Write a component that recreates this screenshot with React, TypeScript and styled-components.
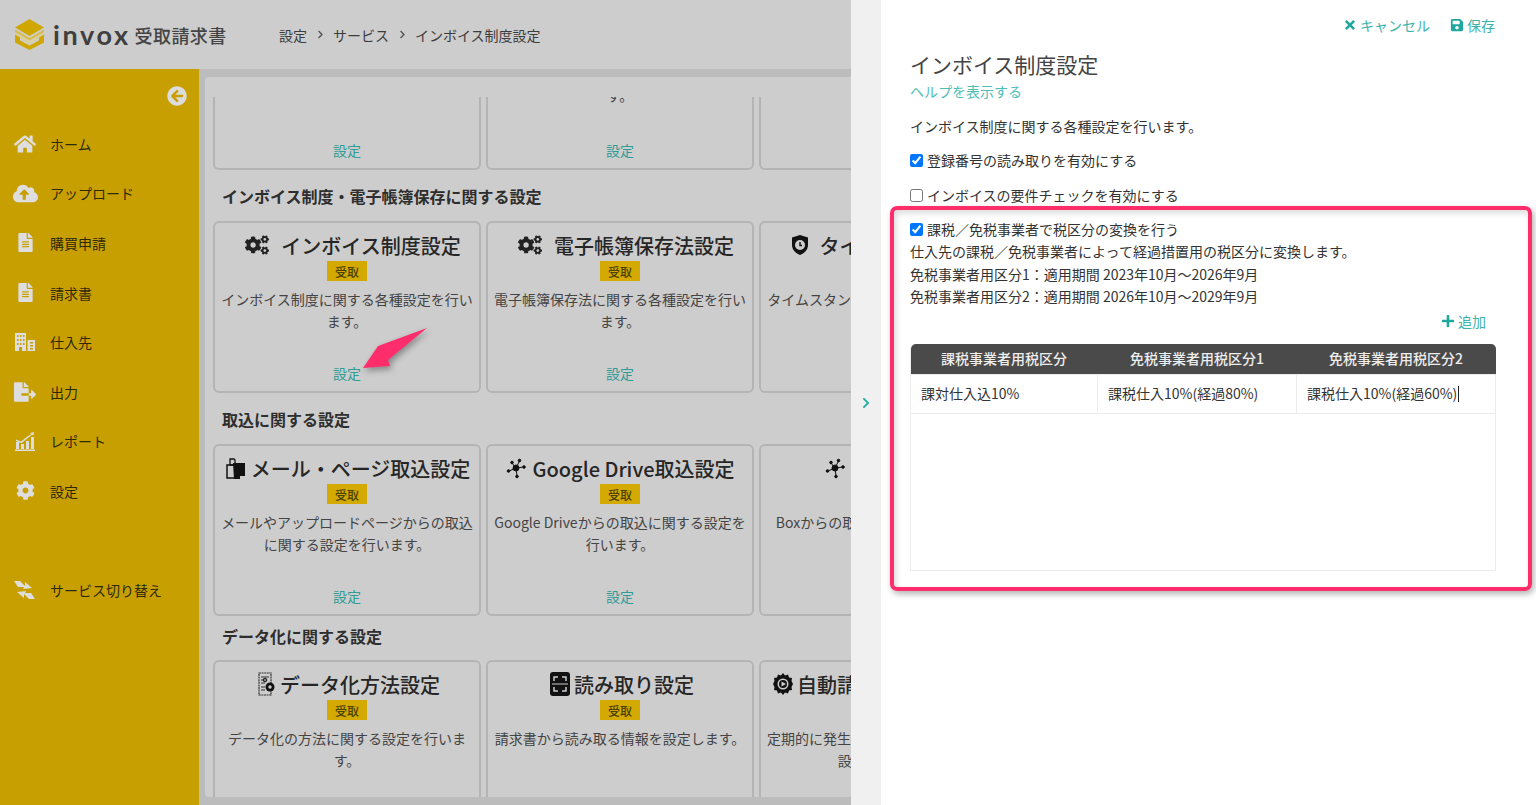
import React from 'react';
import styled, { createGlobalStyle } from 'styled-components';
import {
  FaHome,
  FaCloudUploadAlt,
  FaFileAlt,
  FaFileExport,
  FaCog,
  FaCogs,
  FaArrowCircleLeft,
  FaChevronRight,
  FaTimes,
  FaSave,
  FaPlus,
} from 'react-icons/fa';

const GlobalStyle = createGlobalStyle`
  html, body {
    margin: 0;
    padding: 0;
    height: 100%;
    overflow: hidden;
  }

  body {
    font-family: "Noto Sans CJK JP", "Noto Sans", sans-serif;
    font-size: 14px;
    color: #333;
    background: #fff;
  }

  * {
    box-sizing: border-box;
  }
`;

const Screen = styled.div`
  position: relative;
  display: flex;
  width: 1536px;
  height: 805px;
  overflow: hidden;
`;

// dimmed page behind the slide-in panel
const Page = styled.div`
  display: flex;
  flex-direction: column;
  flex: 0 0 851px;
  position: relative;
  overflow: hidden;
  background: #cdcdcd;
`;

const Header = styled.header`
  display: flex;
  align-items: center;
  flex: 0 0 69px;
  padding-left: 14px;
`;

const Brand = styled.div`
  display: flex;
  align-items: center;
  width: 265px;
`;

const BrandName = styled.span`
  margin-left: 8px;
  font-family: "Lato", "Noto Sans", sans-serif;
  font-size: 27px;
  font-weight: 700;
  letter-spacing: 2.6px;
  line-height: 30px;
  color: #3f3f3f;
`;

const BrandSub = styled.span`
  margin-left: 4px;
  font-size: 18px;
  font-weight: 500;
  letter-spacing: 0.4px;
  color: #444;
`;

const Breadcrumb = styled.nav`
  display: flex;
  align-items: center;
  gap: 8.5px;
  font-size: 14px;
  color: #3c3c3c;

  svg {
    font-size: 9px;
    color: #555;
  }
`;

const Body = styled.div`
  display: flex;
  flex: 1;
  min-height: 0;
`;

const Sidebar = styled.aside`
  flex: 0 0 199px;
  background: #c89f00;
`;

const CollapseRow = styled.div`
  display: flex;
  justify-content: flex-end;
  height: 50px;
  padding: 17px 12px 0 0;
  color: #dcdcdc;
  font-size: 20px;
`;

const NavItem = styled.div<{ $gap?: boolean }>`
  display: flex;
  align-items: center;
  height: 49.6px;
  margin-top: ${p => (p.$gap ? '49.6px' : '0')};
  font-size: 14px;
  color: #2e2a08;
`;

const NavIcon = styled.span`
  display: flex;
  align-items: center;
  justify-content: center;
  width: 50px;
  color: #dedede;
`;

const Main = styled.main`
  flex: 1;
  min-width: 0;
  padding: 8px 0 8px 6px;
  background: #bcbcbc;
  display: flex;
`;

const Content = styled.div`
  flex: 1;
  min-width: 0;
  padding: 20px 0 0 8px;
  border-radius: 4px 0 0 4px;
  background: #cdcdcd;
  overflow: hidden;
`;

const CardGrid = styled.div`
  display: grid;
  grid-template-columns: repeat(3, 268px);
  gap: 5px;
  width: 814px;
`;

const SectionTitle = styled.h3<{ $compact?: boolean }>`
  display: flex;
  align-items: center;
  margin: 0;
  padding: ${p => (p.$compact ? '8px 0 12px 9px' : '13px 0 13px 9px')};
  height: ${p => (p.$compact ? '44px' : '51px')};
  font-size: 16px;
  font-weight: 700;
  line-height: 24px;
  color: #2e2e2e;
`;

const Card = styled.section<{ $clipped?: boolean }>`
  display: flex;
  flex-direction: column;
  align-items: center;
  height: ${p => (p.$clipped ? '73px' : '172px')};
  padding: ${p => (p.$clipped ? '0 5px 7px' : '7px 5px 7px')};
  border: 2px solid #b4b4b4;
  border-top-width: ${p => (p.$clipped ? '0' : '2px')};
  border-radius: ${p => (p.$clipped ? '0 0 6px 6px' : '6px')};
  overflow: hidden;
`;

const CardTitle = styled.h4`
  display: flex;
  align-items: center;
  justify-content: center;
  height: 30px;
  margin: 0 0 1px;
  font-size: 20px;
  font-weight: 500;
  white-space: nowrap;
  color: #262626;
`;

const CardIcon = styled.span<{ $lead?: number; $trail?: number }>`
  display: flex;
  align-items: center;
  margin-left: ${p => p.$lead ?? 0}px;
  margin-right: ${p => p.$trail ?? 4}px;
`;

const Badge = styled.span`
  display: flex;
  align-items: center;
  justify-content: center;
  width: 40px;
  height: 20px;
  background: #d4aa00;
  font-size: 12px;
  font-weight: 500;
  color: #4a4000;
`;

const CardText = styled.p<{ $tail?: boolean }>`
  margin: ${p => (p.$tail ? '-13px 0 0' : '7px 0 0')};
  width: 100%;
  font-size: 14px;
  line-height: 22px;
  text-align: center;
  color: #444;
`;

const CardLink = styled.a`
  margin-top: auto;
  font-size: 14px;
  line-height: 22px;
  color: #2f9c96;
`;

const PointerArrow = styled.svg`
  position: absolute;
  left: 355px;
  top: 322px;
  filter: drop-shadow(2px 3px 3px rgba(0, 0, 0, 0.35));
`;

const Gutter = styled.div`
  display: flex;
  align-items: center;
  justify-content: center;
  flex: 0 0 30px;
  background: #f0f0f0;
  color: #26b0a6;
  font-size: 12px;
`;

const Panel = styled.div`
  flex: 1;
  min-width: 0;
  padding: 15px 40px 0 29px;
  background: #fff;
  color: #333;
`;

const Actions = styled.div`
  display: flex;
  justify-content: flex-end;
  gap: 20px;
  height: 20px;
  margin-right: 1px;
`;

const ActionLink = styled.a`
  display: flex;
  align-items: center;
  gap: 3px;
  font-size: 14px;
  line-height: 20px;
  color: #3bb3aa;

  svg {
    font-size: 14px;
    color: #1fa79d;
  }
`;

const PanelTitle = styled.h2`
  margin: 14px 0 0;
  font-size: 21px;
  font-weight: 400;
  line-height: 30px;
  color: #444;
`;

const HelpLink = styled.a`
  display: block;
  margin-top: 1px;
  font-size: 14px;
  line-height: 22px;
  color: #4dbdb5;
`;

const Line = styled.div<{ $top?: number }>`
  margin-top: ${p => p.$top ?? 0}px;
  font-size: 14px;
  line-height: 22px;
  color: #333;
`;

const CheckRow = styled.label<{ $top: number }>`
  display: flex;
  align-items: center;
  gap: 4px;
  height: 22px;
  margin-top: ${p => p.$top}px;
  font-size: 14px;
`;

const Check = styled.input.attrs({ type: 'checkbox', readOnly: true })`
  width: 13px;
  height: 13px;
  margin: 0;
  accent-color: #0075ff;
`;

const AddRow = styled.div`
  display: flex;
  justify-content: flex-end;
  margin-top: 3px;
  padding-right: 10px;
  height: 22px;
`;

const TableBox = styled.div`
  height: 227px;
  margin-top: 12px;
  border: 1px solid #ececec;
  border-top: 0;
  border-radius: 5px 5px 0 0;
`;

const Table = styled.table`
  width: 585px;
  margin-left: -1px;
  border-collapse: collapse;
  table-layout: fixed;
`;

const Th = styled.th<{ $w: number }>`
  width: ${p => p.$w}px;
  height: 30px;
  padding: 0 0 2px;
  background: #4a4a4a;
  font-size: 14px;
  font-weight: 500;
  color: #eee;

  &:first-child {
    border-top-left-radius: 5px;
  }

  &:last-child {
    border-top-right-radius: 5px;
  }
`;

const Td = styled.td`
  height: 39px;
  padding: 0 10px 2px;
  border: 1px solid #ececec;
  font-size: 14px;
  color: #333;
  white-space: nowrap;
`;

const Caret = styled.span`
  display: inline-block;
  width: 1px;
  height: 16px;
  margin-left: 1px;
  background: #222;
  vertical-align: -3px;
`;

// annotation drawn over the screenshot
const Highlight = styled.div`
  position: absolute;
  left: 890px;
  top: 206px;
  width: 642px;
  height: 385px;
  border: 4px solid #ff2d6c;
  border-radius: 7px;
  box-shadow: 2px 3px 6px rgba(0, 0, 0, 0.3), inset 2px 3px 6px rgba(0, 0, 0, 0.15);
  pointer-events: none;
`;

const LogoMark = () => (
  <svg width="31" height="31" viewBox="0 0 31 31">
    <path d="M15.5 0 30 8.5 15.5 17 1 8.5z" fill="#cfa700" />
    <path d="M1 10.5 15.5 19 30 10.5V13L15.5 21.5 1 13z" fill="#d9bd4a" />
    <path d="M1 14 15.5 22.5 30 14v2L15.5 24.5 1 16z" fill="#e0d08a" />
    <path d="M1 15.5v8L15.5 31 30 23.5v-8l-5 3v3l-9.5 5-9.5-5v-3z" fill="#cfa700" />
  </svg>
);

const BuildingIcon = () => (
  <svg width="20" height="20" viewBox="0 0 20 20" fill="currentColor">
    <path
      fillRule="evenodd"
      d="M0 1h11v18H7v-4H4v4H0zM2 3v2h1.500V3zm3 0v2h1.500V3zm3 0v2h1.500V3zM2 7v2h1.500V7zm3 0v2h1.500V7zm3 0v2h1.500V7zM2 11v2h1.500v-2zm3 0v2h1.500v-2zm3 0v2h1.500v-2z"
    />
    <path fillRule="evenodd" d="M12.500 8H20v11h-7.500zM15 10v1.500h3V10zm0 3v1.500h3V13zm0 3v1.500h3V16z" />
  </svg>
);

const ReportIcon = () => (
  <svg width="20" height="20" viewBox="0 0 20 20" fill="currentColor">
    <path d="M1 11h3v7H1zM6 13h3v5H6zM11 10h3v8h-3zM16 6h3v12h-3zM0 18.500h20V20H0z" />
    <path d="M1 8.500 6 10.500 13 5 16 3.500 15.400 2 19 1l-.6 3.600L17 3.800 13.800 6.300 6.400 12.200 1 10z" />
  </svg>
);

const SwitchIcon = () => (
  <svg width="22" height="20" viewBox="0 0 22 20" fill="currentColor">
    <path d="M0 1h6l5 5V2l7 6-9 1 1-2-3 0-3 0z" />
    <path d="M21 19h-6l-5-5v4l-7-6 9-1-1 2h6z" />
  </svg>
);

const ShieldIcon = () => (
  <svg width="20" height="22" viewBox="0 0 20 22">
    <path d="M10 1 18 3.500V11c0 5-4 8.500-8 10-4-1.500-8-5-8-10V3.500z" fill="#111" />
    <circle cx="10" cy="11" r="5" fill="#cdcdcd" />
    <path d="M10 8v3.500h2" stroke="#111" strokeWidth="1.400" fill="none" />
  </svg>
);

const MailPageIcon = () => (
  <svg width="22" height="24" viewBox="0 0 22 24">
    <path d="M2 9h8v13H2z" fill="none" stroke="#111" strokeWidth="1.500" />
    <path d="M5 9V3h4l1 1v5z" fill="none" stroke="#111" strokeWidth="1.300" />
    <path d="M8 7h12v13h-5v3H9z" fill="#111" />
  </svg>
);

const HubIcon = () => (
  <svg width="20" height="22" viewBox="0 0 20 22" fill="#111" stroke="#111" strokeWidth="1">
    <path d="M10 11 13.500 4M10 11 18 10M10 11 11 19M10 11 3 14M10 11 6 6" fill="none" />
    <circle cx="10" cy="11" r="3" />
    <circle cx="13.500" cy="3.500" r="1.300" />
    <circle cx="18" cy="10" r="1.300" />
    <circle cx="11" cy="19.500" r="1.300" />
    <circle cx="2.500" cy="14" r="1.300" />
    <circle cx="6" cy="5.500" r="1.300" />
  </svg>
);

const DataDocIcon = () => (
  <svg width="18" height="24" viewBox="0 0 18 24">
    <path d="M1 1h12v22H1z" fill="none" stroke="#333" strokeWidth="1.200" strokeDasharray="2 0.600" />
    <path d="M3 5h8M3 8h5M3 11h4M3 15h4M3 18h4" stroke="#333" strokeWidth="1.200" />
    <circle cx="12" cy="15" r="4.500" fill="#111" />
    <circle cx="12" cy="15" r="1.700" fill="#cdcdcd" />
    <circle cx="7" cy="8" r="1.800" fill="none" stroke="#111" />
  </svg>
);

const ScanIcon = () => (
  <svg width="20" height="24" viewBox="0 0 20 24">
    <rect x="0" y="0" width="20" height="24" rx="3" fill="#111" />
    <path d="M4 9V5h4M12 5h4v4M16 15v4h-4M8 19H4v-4" stroke="#cdcdcd" strokeWidth="1.500" fill="none" />
    <path d="M2 12h16" stroke="#cdcdcd" strokeWidth="1" />
  </svg>
);

const AutoIcon = () => (
  <svg width="20" height="22" viewBox="0 0 20 22">
    <path
      d="M10 0l2 2.500 3-1 1 3 3 .5-.5 3L20 11l-1.500 3 .5 3-3 .5-1 3-3-1L10 22l-2-2.500-3 1-1-3-3-.5.5-3L0 11l1.500-3L1 5l3-.5 1-3 3 1z"
      fill="#111"
    />
    <circle cx="10" cy="11" r="5.500" fill="#cdcdcd" />
    <circle cx="10" cy="11" r="4" fill="#111" />
    <path d="M8.500 8.500 13 11l-4.500 2.500z" fill="#cdcdcd" />
  </svg>
);

const GearsIcon = () => <FaCogs size={24} color="#222" />;

const navItems = [
  { label: 'ホーム', icon: <FaHome size={22} /> },
  { label: 'アップロード', icon: <FaCloudUploadAlt size={25} /> },
  { label: '購買申請', icon: <FaFileAlt size={19} /> },
  { label: '請求書', icon: <FaFileAlt size={19} /> },
  { label: '仕入先', icon: <BuildingIcon /> },
  { label: '出力', icon: <FaFileExport size={22} /> },
  { label: 'レポート', icon: <ReportIcon /> },
  { label: '設定', icon: <FaCog size={19} /> },
];

const sections = [
  {
    title: 'インボイス制度・電子帳簿保存に関する設定',
    cards: [
      { title: 'インボイス制度設定', icon: <GearsIcon />, lead: 12, trail: 12, text: 'インボイス制度に関する各種設定を行います。', link: true },
      { title: '電子帳簿保存法設定', icon: <GearsIcon />, lead: 12, trail: 12, text: '電子帳簿保存法に関する各種設定を行います。', link: true },
      { title: 'タイムスタンプ設定', icon: <ShieldIcon />, lead: 2, trail: 10, text: 'タイムスタンプの付与に関する設定を行います。', link: false },
    ],
  },
  {
    title: '取込に関する設定',
    cards: [
      { title: 'メール・ページ取込設定', icon: <MailPageIcon />, lead: 1, text: 'メールやアップロードページからの取込に関する設定を行います。', link: true },
      { title: 'Google Drive取込設定', icon: <HubIcon />, trail: 7, text: 'Google Driveからの取込に関する設定を行います。', link: true },
      { title: 'Box取込設定', icon: <HubIcon />, lead: 6, trail: 6, text: 'Boxからの取込に関する設定を行います。', link: false },
    ],
  },
  {
    title: 'データ化に関する設定',
    compact: true,
    cards: [
      { title: 'データ化方法設定', icon: <DataDocIcon />, lead: 4, text: 'データ化の方法に関する設定を行います。', link: true },
      { title: '読み取り設定', icon: <ScanIcon />, lead: 4, text: '請求書から読み取る情報を設定します。', link: true },
      { title: '自動請求書データ化設定', icon: <AutoIcon />, lead: 4, text: '定期的に発生する請求書の処理に関する設定を行います。', link: false },
    ],
  },
];

const App = () => (
  <Screen>
    <GlobalStyle />
    <Page>
      <Header>
        <Brand>
          <LogoMark />
          <BrandName>invox</BrandName>
          <BrandSub>受取請求書</BrandSub>
        </Brand>
        <Breadcrumb>
          <span>設定</span>
          <FaChevronRight />
          <span>サービス</span>
          <FaChevronRight />
          <span>インボイス制度設定</span>
        </Breadcrumb>
      </Header>
      <Body>
        <Sidebar>
          <CollapseRow>
            <FaArrowCircleLeft />
          </CollapseRow>
          {navItems.map(item => (
            <NavItem key={item.label}>
              <NavIcon>{item.icon}</NavIcon>
              {item.label}
            </NavItem>
          ))}
          <NavItem $gap>
            <NavIcon>
              <SwitchIcon />
            </NavIcon>
            サービス切り替え
          </NavItem>
        </Sidebar>
        <Main>
          <Content>
            <CardGrid>
              <Card $clipped>
                <CardLink>設定</CardLink>
              </Card>
              <Card $clipped>
                <CardText $tail>す。</CardText>
                <CardLink>設定</CardLink>
              </Card>
              <Card $clipped />
            </CardGrid>
            {sections.map(section => (
              <React.Fragment key={section.title}>
                <SectionTitle $compact={section.compact}>{section.title}</SectionTitle>
                <CardGrid>
                  {section.cards.map(card => (
                    <Card key={card.title}>
                      <CardTitle>
                        <CardIcon $lead={card.lead} $trail={card.trail}>
                          {card.icon}
                        </CardIcon>
                        <span>{card.title}</span>
                      </CardTitle>
                      <Badge>受取</Badge>
                      <CardText>{card.text}</CardText>
                      {card.link && <CardLink>設定</CardLink>}
                    </Card>
                  ))}
                </CardGrid>
              </React.Fragment>
            ))}
          </Content>
        </Main>
      </Body>
      <PointerArrow width="76" height="52" viewBox="0 0 76 52">
        <path d="M72 6 23 24 8 46 35 44 33 38z" fill="#ff2d6c" />
      </PointerArrow>
    </Page>
    <Gutter>
      <FaChevronRight />
    </Gutter>
    <Panel>
      <Actions>
        <ActionLink>
          <FaTimes />
          キャンセル
        </ActionLink>
        <ActionLink>
          <FaSave />
          保存
        </ActionLink>
      </Actions>
      <PanelTitle>インボイス制度設定</PanelTitle>
      <HelpLink>ヘルプを表示する</HelpLink>
      <Line $top={13}>インボイス制度に関する各種設定を行います。</Line>
      <CheckRow $top={12}>
        <Check checked />
        登録番号の読み取りを有効にする
      </CheckRow>
      <CheckRow $top={13}>
        <Check checked={false} />
        インボイスの要件チェックを有効にする
      </CheckRow>
      <CheckRow $top={12}>
        <Check checked />
        課税／免税事業者で税区分の変換を行う
      </CheckRow>
      <Line>仕入先の課税／免税事業者によって経過措置用の税区分に変換します。</Line>
      <Line $top={1}>免税事業者用区分1：適用期間 2023年10月～2026年9月</Line>
      <Line>免税事業者用区分2：適用期間 2026年10月～2029年9月</Line>
      <AddRow>
        <ActionLink>
          <FaPlus />
          追加
        </ActionLink>
      </AddRow>
      <TableBox>
        <Table>
          <thead>
            <tr>
              <Th $w={187}>課税事業者用税区分</Th>
              <Th $w={199}>免税事業者用税区分1</Th>
              <Th $w={199}>免税事業者用税区分2</Th>
            </tr>
          </thead>
          <tbody>
            <tr>
              <Td>課対仕入込10%</Td>
              <Td>課税仕入10%(経過80%)</Td>
              <Td>
                課税仕入10%(経過60%)
                <Caret />
              </Td>
            </tr>
          </tbody>
        </Table>
      </TableBox>
    </Panel>
    <Highlight />
  </Screen>
);

export default App;
